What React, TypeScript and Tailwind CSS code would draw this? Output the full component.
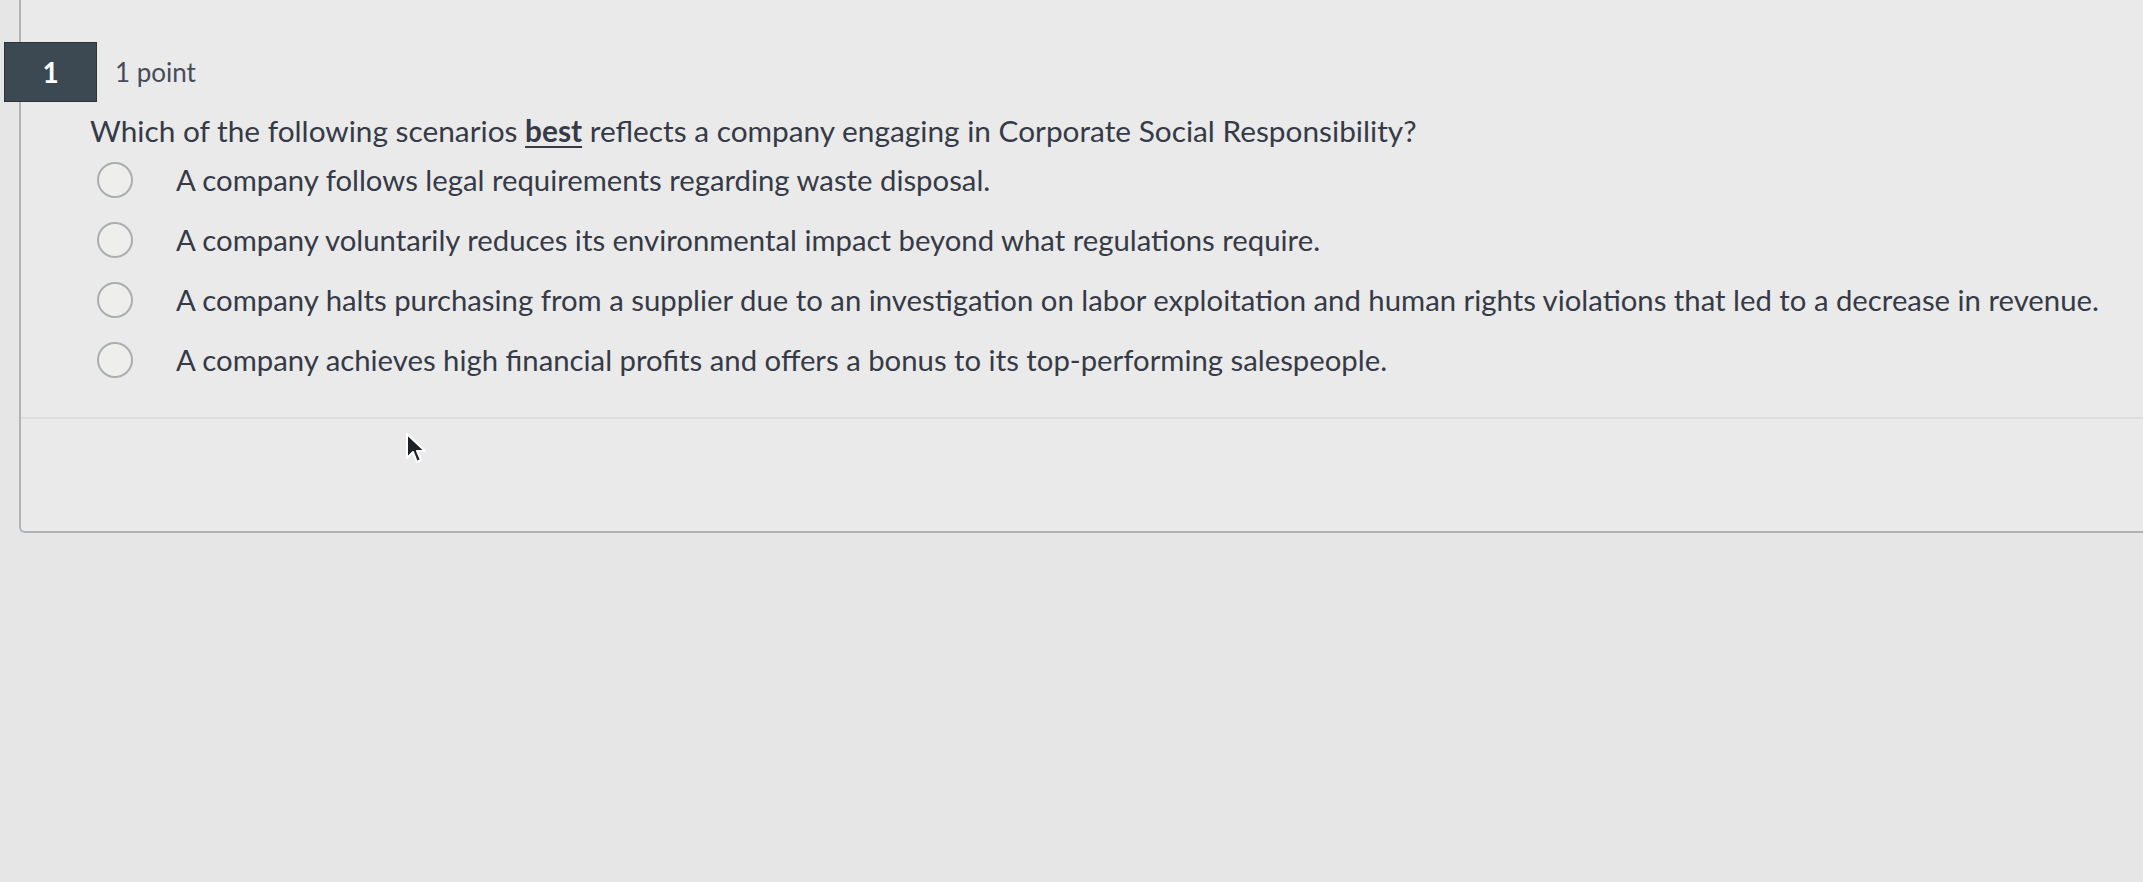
import React from 'react';

const options = [
  'A company follows legal requirements regarding waste disposal.',
  'A company voluntarily reduces its environmental impact beyond what regulations require.',
  'A company halts purchasing from a supplier due to an investigation on labor exploitation and human rights violations that led to a decrease in revenue.',
  'A company achieves high financial profits and offers a bonus to its top-performing salespeople.',
];

function Radio() {
  return <span className="block w-[36px] h-[36px] shrink-0 rounded-full border-2 border-[#aaaeb1] bg-[#eeeeed]" />;
}

export default function App() {
  return (
    <div
      className="relative min-h-screen overflow-hidden bg-[#e5e6e5] text-[#363a47]"
      style={{ fontFamily: 'Lato, "Open Sans", sans-serif' }}
    >
      <div className="ml-[19px] mr-[-20px] h-[533px] border-l-2 border-b-2 border-[#b1b4b6] rounded-bl-md bg-[#e9eae9] flex flex-col">
        <div className="pt-[42px] flex items-center">
          <div className="-ml-[17px] w-[93px] h-[60px] bg-[#3c4852] border border-[#2b333a] flex items-center justify-center text-white text-[28px] font-bold">
            1
          </div>
          <span className="ml-[18px] text-[26px] text-[#474b57]">1 point</span>
        </div>
        <p className="pl-[69px] mt-[10px] text-[29.8px] leading-[38px]">
          Which of the following scenarios <span className="font-bold underline underline-offset-4">best</span> reflects a company engaging in Corporate Social Responsibility?
        </p>
        <div className="flex flex-col pl-[76px]">
          {options.map((o) => (
            <label key={o} className="h-[60px] flex items-center gap-[43px] text-[29.3px]">
              <Radio />
              <span>{o}</span>
            </label>
          ))}
        </div>
        <div className="mt-[27px] h-[2px] bg-[#dcdddc]" />
      </div>
      <svg className="absolute left-[405px] top-[432px]" width="22" height="32" viewBox="0 0 22 32">
        <path d="M2 2 L2 26 L8 20 L12 30 L16 28 L12 19 L20 19 Z" fill="#1e2028" stroke="#fff" strokeWidth="2" strokeLinejoin="round" />
      </svg>
    </div>
  );
}
